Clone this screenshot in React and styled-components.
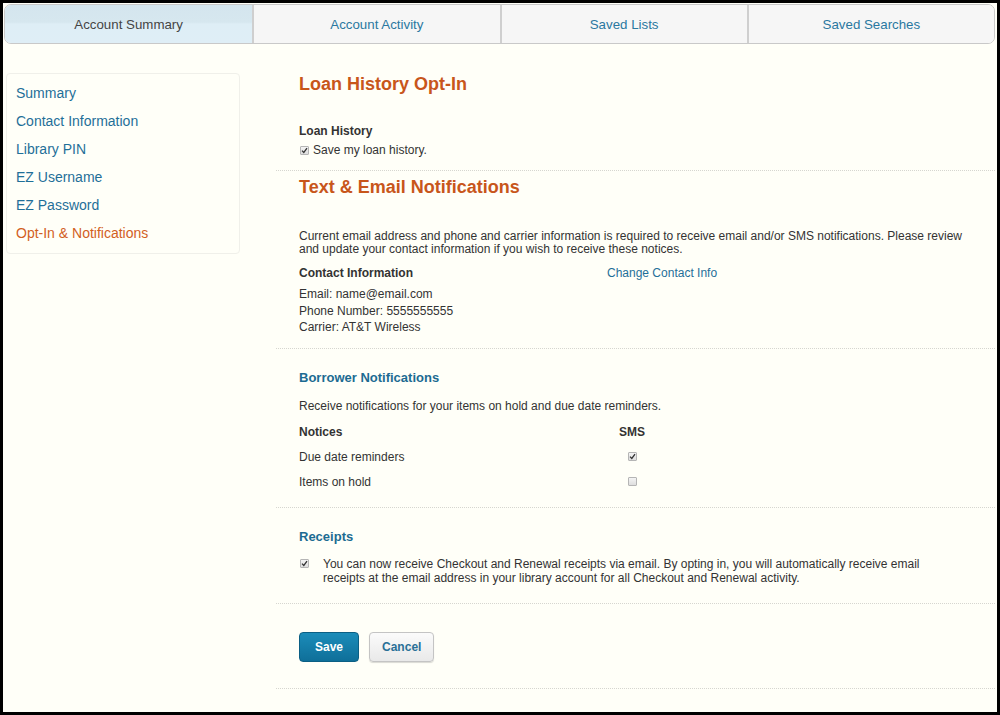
import styled, { createGlobalStyle } from "styled-components";

const Global = createGlobalStyle`
  html, body { margin: 0; padding: 0; background: #000; }
  body { font-family: "Liberation Sans", Arial, sans-serif; color: #333; }
`;

const Page = styled.div`
  margin: 3px;
  height: 709px;
  box-sizing: border-box;
  padding: 1px 2px 0 1px;
  background: #fffff8;
  overflow: hidden;
`;

const Tabs = styled.nav`
  display: grid;
  grid-template-columns: repeat(4, 1fr);
  height: 40px;
  border: 1px solid #c9c9c9;
  border-radius: 7px;
  overflow: hidden;
  box-sizing: border-box;
`;

const Tab = styled.a`
  display: flex;
  align-items: center;
  justify-content: center;
  font-size: 13.3px;
  text-decoration: none;
  color: ${(p) => (p.$active ? "#444" : "#2a78a0")};
  background: ${(p) =>
    p.$active
      ? "linear-gradient(#d4e5ee 0%, #d6e7ef 45%, #deeef6 50%, #dfeef6 100%)"
      : "#f6f6f6"};
  border-left: ${(p) => (p.$first ? "none" : "2px solid #cfcfcf")};
`;

const Body = styled.div`
  display: flex;
  align-items: flex-start;
  gap: 36px;
  margin-top: 29px;
`;

const Sidebar = styled.ul`
  list-style: none;
  margin: 0 0 0 2px;
  padding: 5px 9px 6px;
  width: 234px;
  box-sizing: border-box;
  border: 1px solid #f0f0ea;
  border-radius: 4px;
`;

const SideItem = styled.li`
  font-size: 14px;
  line-height: 28px;
  color: ${(p) => (p.$active ? "#d2601f" : "#1f6f98")};
`;

const Main = styled.main`
  flex: 1;
`;

const Section = styled.section`
  padding: ${(p) => p.$pad || "0"} 23px ${(p) => p.$bottom || "0"};
  border-bottom: 1px dotted #d6d6d0;
`;

const Heading = styled.h2`
  margin: 0;
  font-size: 18px;
  line-height: 22px;
  font-weight: bold;
  color: #c8561b;
`;

const SubHeading = styled.h3`
  margin: 0;
  font-size: 13px;
  line-height: 16px;
  font-weight: bold;
  color: #1c6b92;
`;

const Label = styled.div`
  font-size: 12px;
  line-height: 16px;
  font-weight: bold;
  color: #333;
  margin-top: ${(p) => p.$mt || "0"};
`;

const Text = styled.p`
  margin: ${(p) => p.$mt || "0"} 0 0;
  font-size: 12px;
  line-height: ${(p) => p.$lh || "16px"};
  color: #333;
`;

const CheckRow = styled.label`
  display: flex;
  align-items: ${(p) => (p.$top ? "flex-start" : "center")};
  gap: ${(p) => p.$gap || "4px"};
  font-size: 12px;
  line-height: ${(p) => p.$lh || "16px"};
  margin-top: ${(p) => p.$mt || "0"};
  padding-left: 1px;
`;

const ReceiptText = styled.span`
  max-width: 612px;
`;

const Box = styled.span`
  display: inline-flex;
  align-items: center;
  justify-content: center;
  flex: none;
  width: 7px;
  height: 7px;
  border: 1px solid #b5b5b5;
  border-radius: 1px;
  background: linear-gradient(#f4f4f4, #dedede);
  margin-top: ${(p) => p.$mt || "0"};
`;

const Check = ({ checked, mt }) => (
  <Box $mt={mt}>
    {checked && (
      <svg width="7" height="7" viewBox="0 0 7 7">
        <path d="M1 3.6 L2.8 5.4 L6 1.2" fill="none" stroke="#333" strokeWidth="1.3" />
      </svg>
    )}
  </Box>
);

const InfoGrid = styled.div`
  display: grid;
  grid-template-columns: 308px 1fr;
  margin-top: 9px;
`;

const Link = styled.a`
  font-size: 12px;
  line-height: 16px;
  color: #1f6f98;
  text-decoration: none;
`;

const Contact = styled.div`
  margin-top: 5px;
  font-size: 12px;
  line-height: 16.5px;
`;

const NoticeTable = styled.div`
  display: grid;
  grid-template-columns: 320px 26px;
  row-gap: 9px;
  margin-top: 10px;
  font-size: 12px;
  line-height: 16px;
`;

const Cell = styled.div`
  font-weight: ${(p) => (p.$head ? "bold" : "normal")};
  display: flex;
  align-items: center;
  justify-content: ${(p) => (p.$center ? "center" : "flex-start")};
`;

const Buttons = styled.div`
  display: flex;
  gap: 10px;
`;

const Button = styled.button`
  height: 30px;
  padding: 0 ${(p) => (p.$primary ? "15px" : "12px")};
  font-family: inherit;
  font-size: 12px;
  font-weight: bold;
  border-radius: 4px;
  cursor: pointer;
  color: ${(p) => (p.$primary ? "#fff" : "#2a7097")};
  border: 1px solid ${(p) => (p.$primary ? "#0b5f84" : "#c4c4c4")};
  background: ${(p) =>
    p.$primary
      ? "linear-gradient(#1b8cb9, #0f6f99)"
      : "linear-gradient(#fbfbfb, #e9e9e9)"};
  box-shadow: ${(p) => (p.$primary ? "none" : "0 1px 1px rgba(0,0,0,0.15)")};
`;

const tabs = ["Account Summary", "Account Activity", "Saved Lists", "Saved Searches"];
const side = [
  "Summary",
  "Contact Information",
  "Library PIN",
  "EZ Username",
  "EZ Password",
  "Opt-In & Notifications",
];

export default function App() {
  return (
    <>
      <Global />
      <Page>
        <Tabs>
          {tabs.map((t, i) => (
            <Tab key={t} $active={i === 0} $first={i === 0}>
              {t}
            </Tab>
          ))}
        </Tabs>
        <Body>
          <Sidebar>
            {side.map((s, i) => (
              <SideItem key={s} $active={i === side.length - 1}>
                {s}
              </SideItem>
            ))}
          </Sidebar>
          <Main>
            <Section $bottom="12px">
              <Heading>Loan History Opt-In</Heading>
              <Label $mt="28px">Loan History</Label>
              <CheckRow $mt="3px">
                <Check checked />
                Save my loan history.
              </CheckRow>
            </Section>

            <Section $pad="5px" $bottom="12px">
              <Heading>Text &amp; Email Notifications</Heading>
              <Text $mt="32px" $lh="13px">
                Current email address and phone and carrier information is required to receive
                email and/or SMS notifications. Please review and update your contact information
                if you wish to receive these notices.
              </Text>
              <InfoGrid>
                <Label>Contact Information</Label>
                <Link>Change Contact Info</Link>
              </InfoGrid>
              <Contact>
                <div>Email: name@email.com</div>
                <div>Phone Number: 5555555555</div>
                <div>Carrier: AT&amp;T Wireless</div>
              </Contact>
            </Section>

            <Section $pad="21px" $bottom="17px">
              <SubHeading>Borrower Notifications</SubHeading>
              <Text $mt="12px">Receive notifications for your items on hold and due date reminders.</Text>
              <NoticeTable>
                <Cell $head>Notices</Cell>
                <Cell $head $center>SMS</Cell>
                <Cell>Due date reminders</Cell>
                <Cell $center>
                  <Check checked />
                </Cell>
                <Cell>Items on hold</Cell>
                <Cell $center>
                  <Check />
                </Cell>
              </NoticeTable>
            </Section>

            <Section $pad="21px" $bottom="18px">
              <SubHeading>Receipts</SubHeading>
              <CheckRow $top $gap="14px" $lh="14px" $mt="12px">
                <Check checked mt="2px" />
                <ReceiptText>
                  You can now receive Checkout and Renewal receipts via email. By opting in, you
                  will automatically receive email receipts at the email address in your library
                  account for all Checkout and Renewal activity.
                </ReceiptText>
              </CheckRow>
            </Section>

            <Section $pad="28px" $bottom="26px">
              <Buttons>
                <Button $primary>Save</Button>
                <Button>Cancel</Button>
              </Buttons>
            </Section>
          </Main>
        </Body>
      </Page>
    </>
  );
}
